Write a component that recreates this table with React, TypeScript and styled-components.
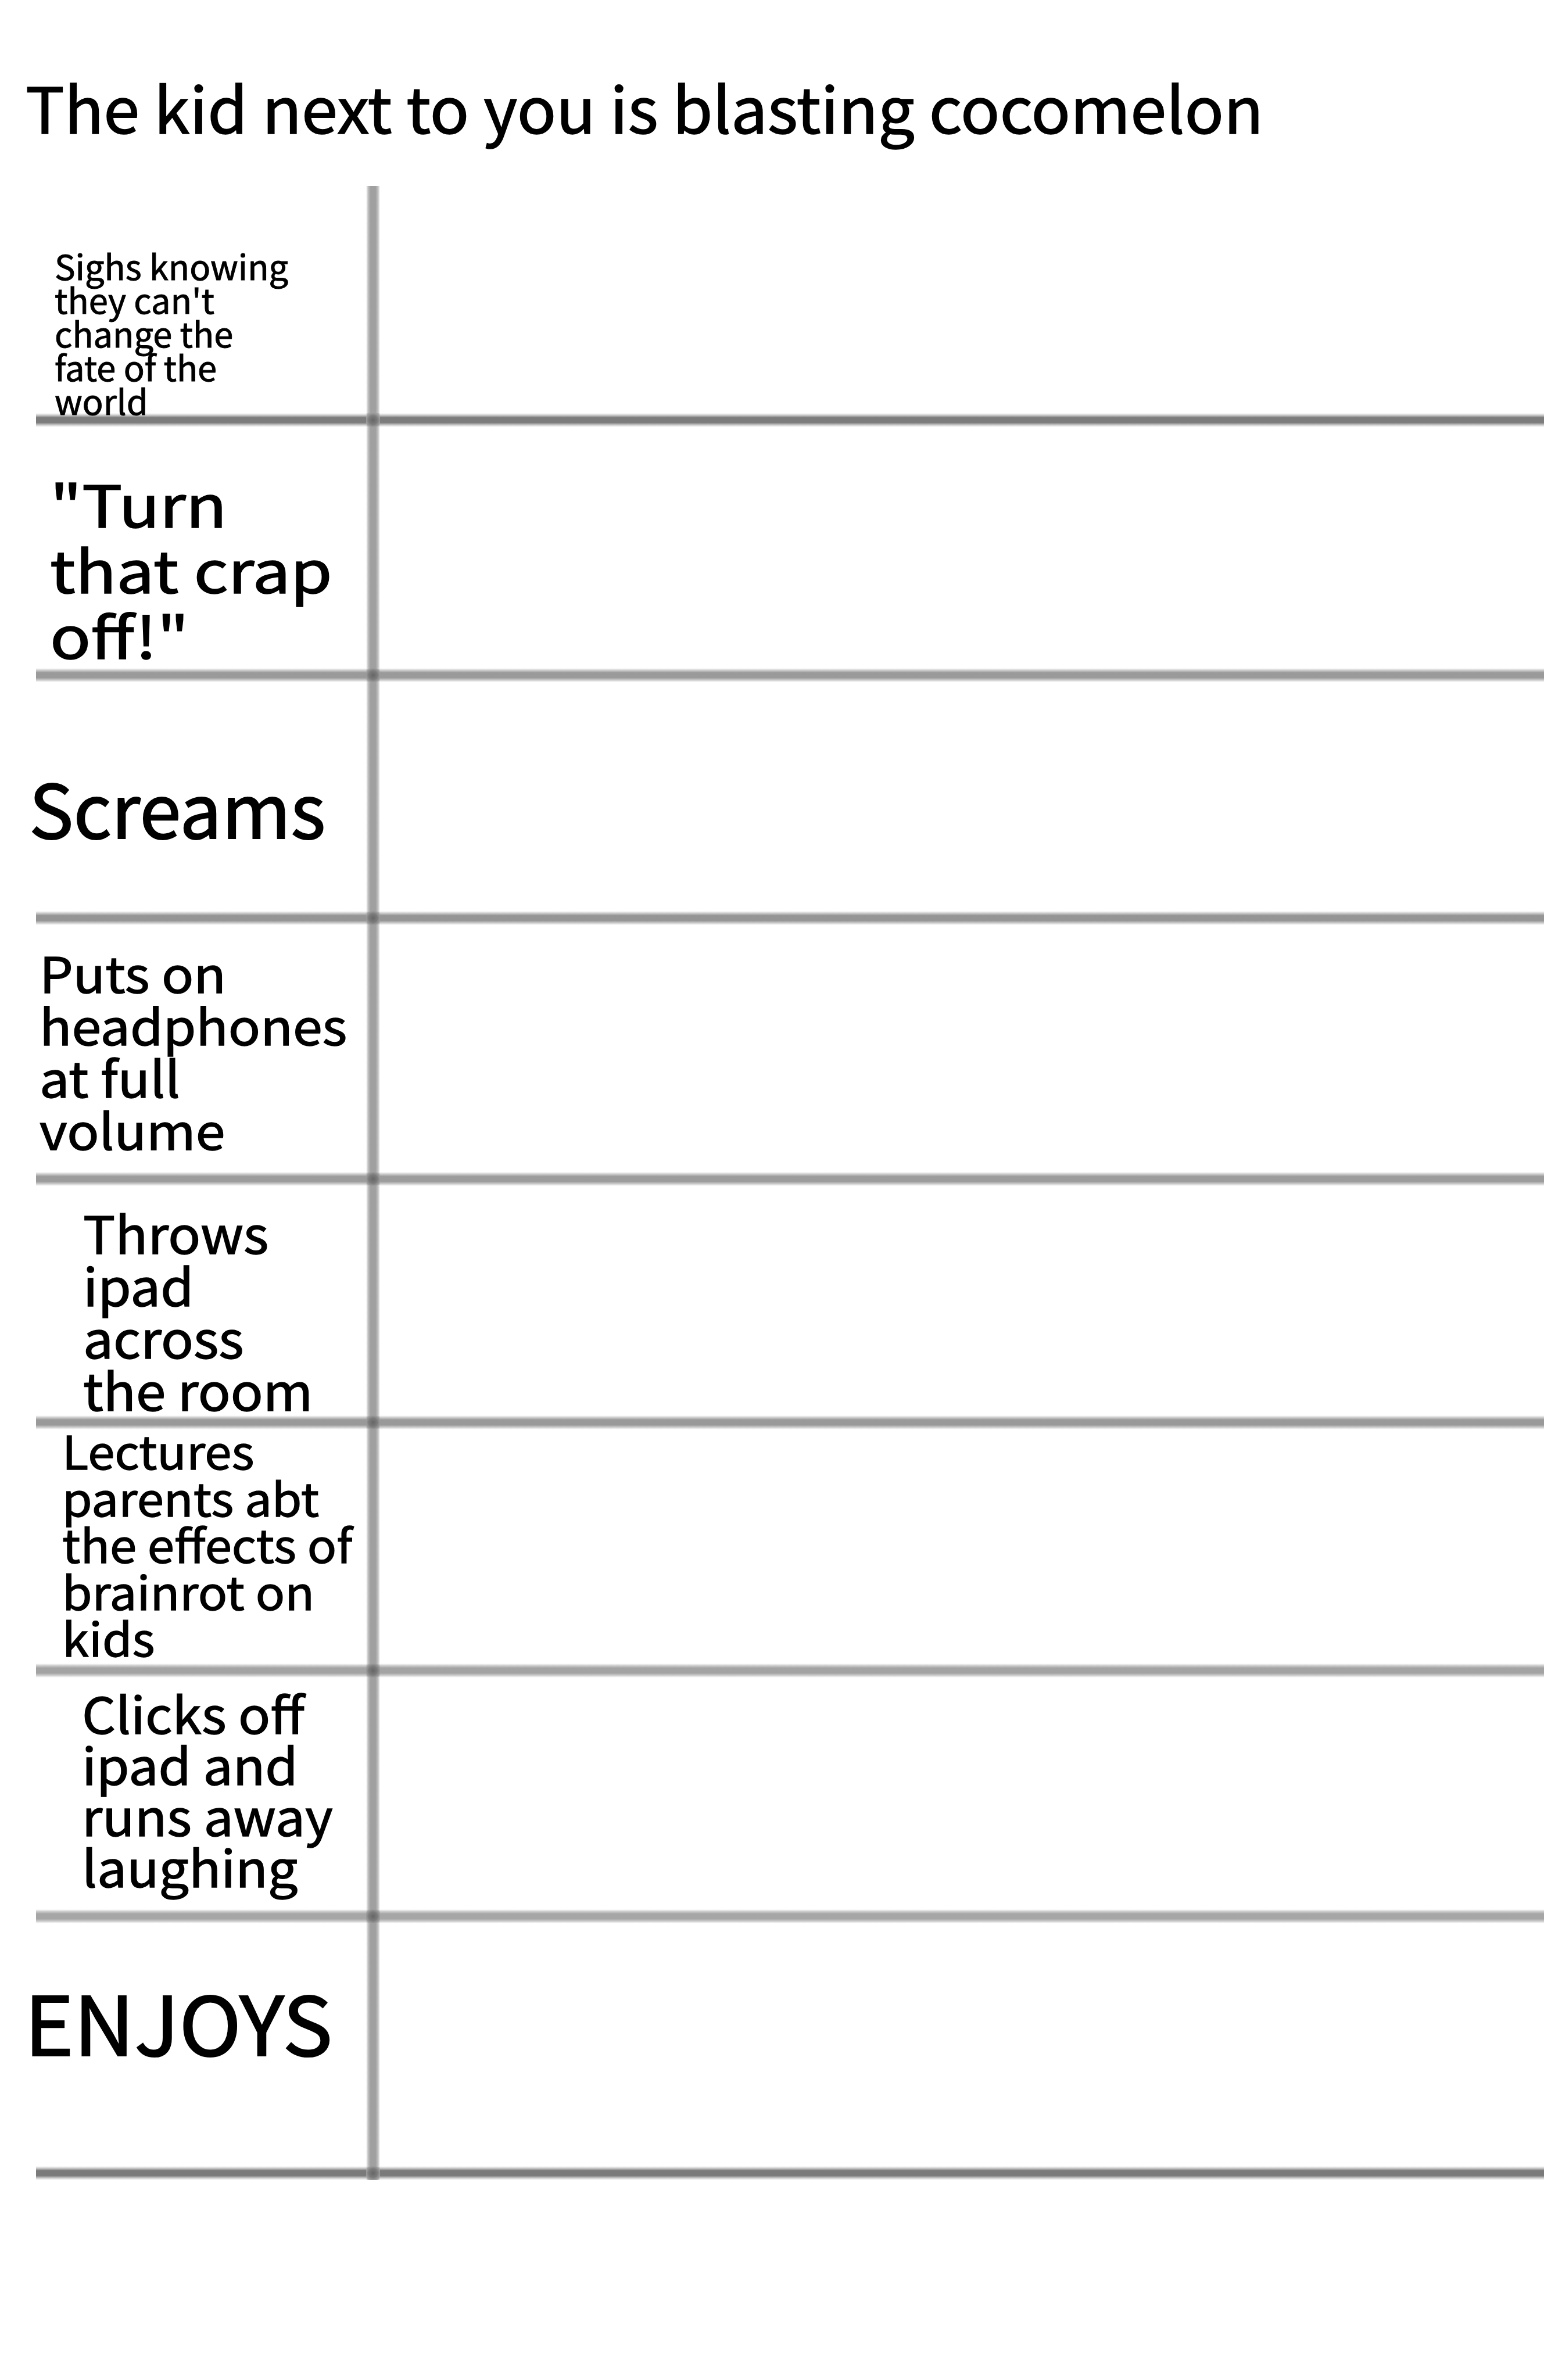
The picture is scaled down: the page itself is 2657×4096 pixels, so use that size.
import React from "react";
import styled, { createGlobalStyle } from "styled-components";

interface Tier {
  text: string;
  size: number;
  lineHeight: number;
  left: number;
  top: number;
  height: number;
  stretch: number;
  shade: string;
}

const tiers: Tier[] = [
  { text: "Sighs knowing\nthey can't\nchange the\nfate of the\nworld", size: 59, lineHeight: 58, left: 94, top: 108, height: 391, stretch: 1.01, shade: "#7c7c7c" },
  { text: "\"Turn\nthat crap\noff!\"", size: 100, lineHeight: 113, left: 86, top: 73, height: 415, stretch: 1.16, shade: "#9a9a9a" },
  { text: "Screams", size: 127, lineHeight: 152, left: 50, top: 138, height: 394, stretch: 1.01, shade: "#959595" },
  { text: "Puts on\nheadphones\nat full\nvolume", size: 85, lineHeight: 90, left: 68, top: 35, height: 425, stretch: 1.075, shade: "#9c9c9c" },
  { text: "Throws\nipad\nacross\nthe room", size: 88, lineHeight: 90, left: 143, top: 34, height: 395, stretch: 1.05, shade: "#999999" },
  { text: "Lectures\nparents abt\nthe effects of\nbrainrot on\nkids", size: 79, lineHeight: 80.5, left: 107, top: -5, height: 403, stretch: 1.055, shade: "#a3a3a3" },
  { text: "Clicks off\nipad and\nruns away\nlaughing", size: 86, lineHeight: 88, left: 141, top: 16, height: 399, stretch: 1.06, shade: "#a6a6a6" },
  { text: "ENJOYS", size: 140, lineHeight: 168, left: 42, top: 83, height: 418, stretch: 1.03, shade: "#7a7a7a" },
];

const App: React.FC = () => {
  return (
    <Page>
      <GlobalStyle />
      <Title>The kid next to you is blasting cocomelon</Title>
      <Chart>
        {tiers.map((tier, index) => (
          <React.Fragment key={index}>
            <TierRow $height={tier.height}>
              <Label
                $size={tier.size}
                $lineHeight={tier.lineHeight}
                $left={tier.left}
                $top={tier.top}
                $stretch={tier.stretch}
              >
                {tier.text}
              </Label>
              <Axis />
              <Blank />
            </TierRow>
            <Divider>
              <span />
              <Rule $shade={tier.shade} />
              <Junction />
              <Rule $shade={tier.shade} />
            </Divider>
          </React.Fragment>
        ))}
      </Chart>
    </Page>
  );
};

const GlobalStyle = createGlobalStyle`
  html, body {
    margin: 0;
    padding: 0;
    background: #ffffff;
  }

  body {
    font-family: "Noto Sans CJK SC", "Noto Sans", sans-serif;
    color: #000000;
  }
`;

const Page = styled.div`
  width: 2657px;
  min-height: 4096px;
  padding-top: 118px;
  box-sizing: border-box;
  background: #ffffff;
  overflow: hidden;
`;

const Title = styled.h1`
  margin: 0 0 72px 44px;
  font-size: 109px;
  line-height: 130px;
  font-weight: 400;
  white-space: nowrap;
  -webkit-text-stroke: 1.6px #000000;
  transform: scaleX(1.022);
  transform-origin: left center;
`;

const Chart = styled.div`
  display: flex;
  flex-direction: column;
`;

const TierRow = styled.div<{ $height: number }>`
  display: grid;
  grid-template-columns: 630px 24px 1fr;
  height: ${(p) => p.$height}px;
`;

const Label = styled.div<{ $size: number; $lineHeight: number; $left: number; $top: number; $stretch: number }>`
  position: relative;
  z-index: 1;
  margin-top: ${(p) => p.$top}px;
  margin-left: ${(p) => p.$left}px;
  font-size: ${(p) => p.$size}px;
  line-height: ${(p) => p.$lineHeight}px;
  white-space: pre;
  -webkit-text-stroke: ${(p) => (p.$size * 0.016).toFixed(2)}px #000000;
  transform: scaleX(${(p) => p.$stretch});
  transform-origin: left top;
`;

const Axis = styled.div`
  background: linear-gradient(
    to right,
    rgba(170, 170, 170, 0) 0%,
    #c2c2c2 14%,
    #a0a0a0 32%,
    #a0a0a0 68%,
    #c2c2c2 86%,
    rgba(170, 170, 170, 0) 100%
  );
`;

const Blank = styled.div``;

const Divider = styled.div`
  display: grid;
  grid-template-columns: 62px 568px 24px 1fr;
  height: 24px;
`;

const Rule = styled.div<{ $shade: string }>`
  background: linear-gradient(
    to bottom,
    rgba(200, 200, 200, 0) 0%,
    #cfcfcf 14%,
    ${(p) => p.$shade} 32%,
    ${(p) => p.$shade} 68%,
    #cfcfcf 86%,
    rgba(200, 200, 200, 0) 100%
  );
`;

const Junction = styled.div`
  background: radial-gradient(circle, #666666 0%, #7c7c7c 45%, #a2a2a2 75%, rgba(190, 190, 190, 0) 100%);
`;

export default App;
